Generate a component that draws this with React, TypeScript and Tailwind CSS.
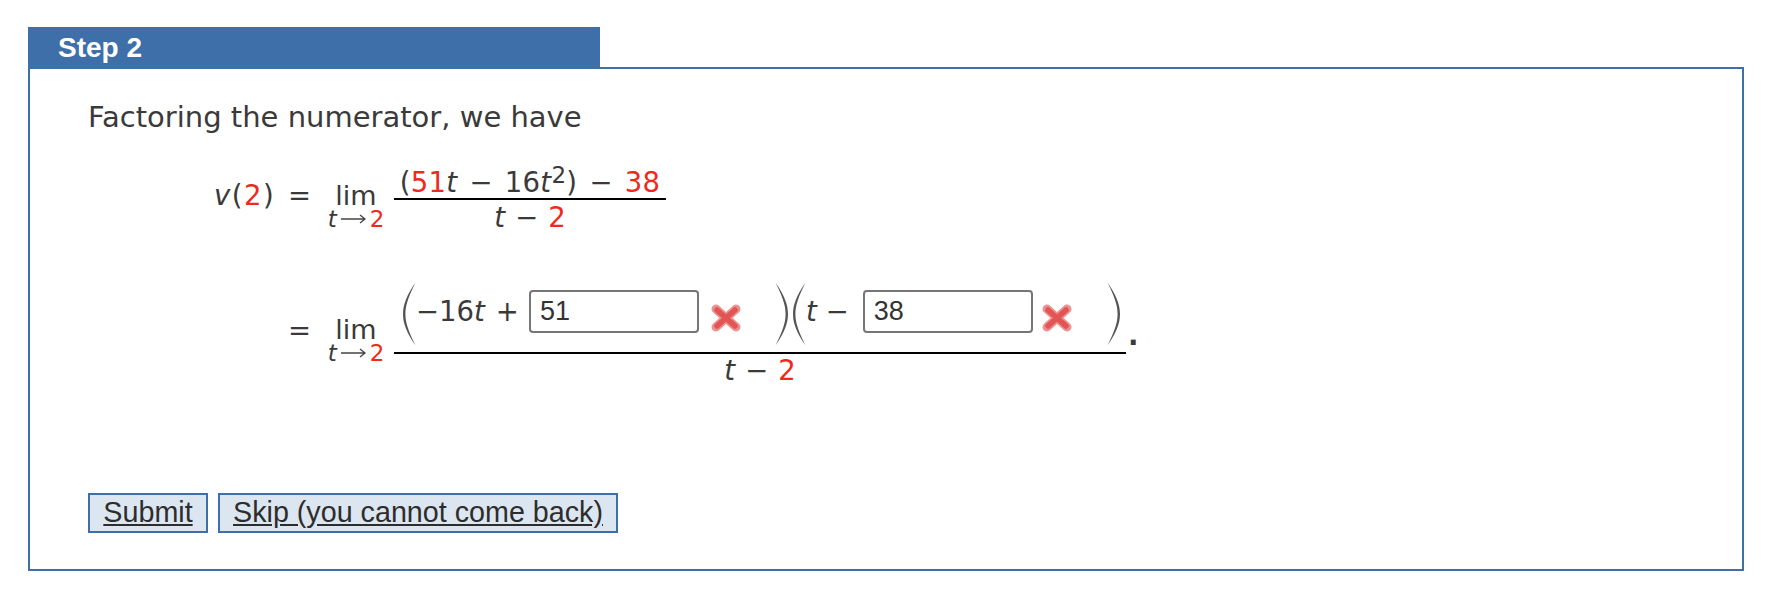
const RED = "text-[#ee2a1c]";

const Two = ({ className = "" }: { className?: string }) => <span className={`${RED} ${className}`}>2</span>;
const T = () => <i>t</i>;
const Minus = () => <span className="mx-[10px]">−</span>;

const Paren = ({ flip = false }: { flip?: boolean }) => (
  <svg viewBox="0 0 14 64" className={`h-[64px] w-[14px] shrink-0 ${flip ? "-scale-x-100" : ""}`}>
    <path d="M13.5 0.5C5 13 1 22 1 32C1 42 5 51 13.5 63.5C7.5 51 3.4 42 3.4 32C3.4 22 7.5 13 13.5 0.5Z" fill="#555" />
  </svg>
);

const Cross = () => (
  <svg viewBox="0 0 30 28" className="mt-[7px] h-[28px] w-[30px] shrink-0" fill="none" strokeLinecap="round">
    <path d="M5 5L25 23M25 5L5 23" stroke="#ee8f8f" strokeWidth="9" />
    <path d="M6 6L24 22M24 6L6 22" stroke="#e25555" strokeWidth="5.5" />
  </svg>
);

const Box = ({ value }: { value: string }) => (
  <input
    readOnly
    value={value}
    className="mb-[6px] h-[43px] w-[170px] shrink-0 rounded-[4px] border-2 border-[#767676] bg-white pl-[9px] font-['Liberation_Sans',sans-serif] text-[27px] text-[#333]"
  />
);

const Lim = ({ className = "" }: { className?: string }) => (
  <div className={`flex flex-col items-center pt-[17px] pr-[9px] ${className}`}>
    <span className="mb-[1px] text-[27px] leading-[21px]">lim</span>
    <span className="flex items-center text-[23px] leading-[24px]">
      <T />
      <svg viewBox="0 0 25 12" className="mx-[4px] h-[12px] w-[25px]" fill="none" stroke="#444" strokeWidth="1.3">
        <path d="M0 6H24M19 2L24 6L19 10" />
      </svg>
      <Two />
    </span>
  </div>
);

const App = () => {
  return (
    <div className="h-[608px] w-[1782px] overflow-hidden bg-white pt-[27px] pl-[28px] font-['DejaVu_Sans',sans-serif] text-[#3a3a3a]">
      <div className="flex h-[42px] w-[572px] items-center bg-[#3f6fa8] pl-[30px] font-['Liberation_Sans',sans-serif] text-[28px] font-bold text-white">
        Step 2
      </div>
      <div className="-mt-[2px] h-[504px] w-[1716px] border-2 border-[#3f6fa8] pt-[28px] pl-[58px]">
        <p className="text-[29px] leading-[40px]">Factoring the numerator, we have</p>

        {/* limit, first line */}
        <div className="mt-[21px] ml-[126px] grid grid-cols-[74px_39px_67px_auto] items-center gap-y-[42px] text-[27.5px]">
          <div className="pb-[6px] tracking-[1.5px]">
            <i>v</i>(<Two />)
          </div>
          <div className="pb-[6px]">=</div>
          <Lim />
          <div className="flex w-[272px] flex-col items-center">
            <div className="flex h-[40px] items-end whitespace-pre leading-[32px] tracking-[0.3px]">
              (<span className={RED}>51</span><T /><span className="mx-[12px]">−</span>16<T /><sup className="text-[23px] leading-none">2</sup>)<span className="mx-[12px]">−</span><span className={RED}>38</span>
            </div>
            <div className="h-[2px] w-full bg-black" />
            <div className="h-[40px] whitespace-pre leading-[34px]">
              <T /><Minus /><Two />
            </div>
          </div>

          {/* limit, factored */}
          <div />
          <div className="pb-[44px]">=</div>
          <Lim className="mb-[40px]" />
          <div className="flex items-center">
            <div className="flex w-[732px] flex-col items-center">
              <div className="flex h-[70px] w-full items-center pb-[6px] pl-[8px]">
                <Paren />
                <span className="mb-[4px] whitespace-pre">−16<T /></span>
                <span className="mb-[4px] ml-[11px]">+</span>
                <span className="ml-[10px] flex items-center">
                  <Box value="51" />
                  <span className="ml-[12px]"><Cross /></span>
                </span>
                <span className="ml-[34px]"><Paren flip /></span>
                <span className="ml-[3px]"><Paren /></span>
                <span className="mb-[4px]"><T /></span>
                <span className="mb-[4px] ml-[9px]">−</span>
                <span className="ml-[14px] flex items-center">
                  <Box value="38" />
                  <span className="ml-[9px]"><Cross /></span>
                </span>
                <span className="ml-[35px]"><Paren flip /></span>
              </div>
              <div className="h-[2px] w-full bg-black" />
              <div className="h-[70px] whitespace-pre leading-[32px]">
                <T /><Minus /><Two />
              </div>
            </div>
            <span className="mb-[34px] ml-[2px] font-bold">.</span>
          </div>
        </div>

        <div className="mt-[69px] flex gap-[10px] font-['Liberation_Sans',sans-serif] text-[28.7px] leading-[30px] text-[#2d2d2d]">
          <button className="h-[40px] w-[120px] border-2 border-[#3f6fa8] bg-[#dce6f0] pb-[3px] underline">Submit</button>
          <button className="h-[40px] w-[400px] border-2 border-[#3f6fa8] bg-[#dce6f0] pb-[3px] underline">Skip (you cannot come back)</button>
        </div>
      </div>
    </div>
  );
};

export default App;
